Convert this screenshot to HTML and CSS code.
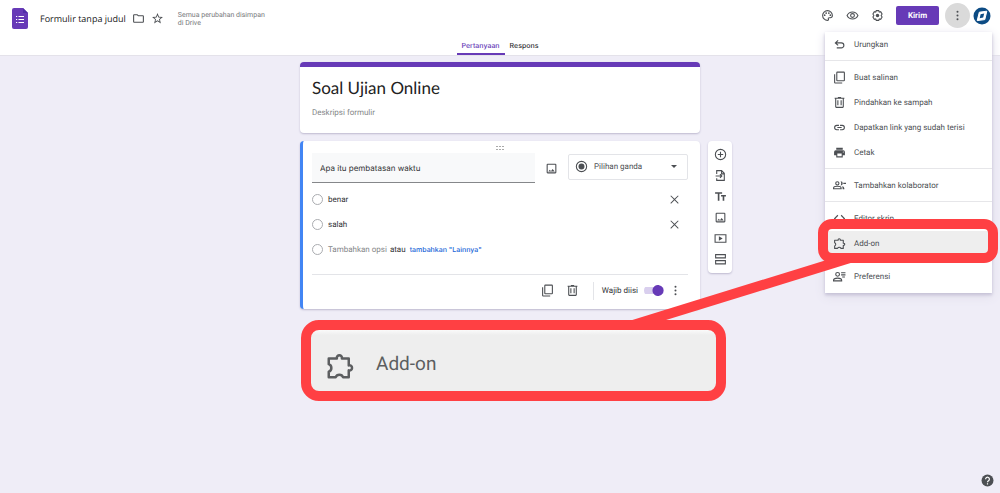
FILE: index.html
```html
<!DOCTYPE html>
<html lang="id">
<head>
<meta charset="utf-8">
<title>Formulir tanpa judul</title>
<link rel="stylesheet" href="styles.css">
</head>
<body>
<svg class="sprite" aria-hidden="true">
  <symbol id="image" viewBox="0 0 24 24"><path d="M19 5v14H5V5h14m0-2H5a2 2 0 0 0-2 2v14a2 2 0 0 0 2 2h14a2 2 0 0 0 2-2V5a2 2 0 0 0-2-2zm-5 10l-3 4-2-2.500-3 3h12z"/></symbol>
  <symbol id="copy" viewBox="0 0 24 24"><path d="M4 6H2v15a2 2 0 0 0 2 2h13v-2H4zM20 1H8a2 2 0 0 0-2 2v14a2 2 0 0 0 2 2h12a2 2 0 0 0 2-2V3a2 2 0 0 0-2-2zm0 16H8V3h12z"/></symbol>
  <symbol id="trash" viewBox="0 0 24 24"><path d="M15 3V2H9v1H3v2h1v15a2 2 0 0 0 2 2h12a2 2 0 0 0 2-2V5h1V3zm3 17H6V5h12zM8 8h2v9H8zm6 0h2v9h-2z"/></symbol>
  <symbol id="close" viewBox="0 0 24 24"><path d="M21 4.400L19.600 3 12 10.600 4.400 3 3 4.400 10.600 12 3 19.600 4.400 21 12 13.400 19.600 21 21 19.600 13.400 12z"/></symbol>
  <symbol id="more" viewBox="0 0 24 24"><circle cx="12" cy="4" r="2.200"/><circle cx="12" cy="12" r="2.200"/><circle cx="12" cy="20" r="2.200"/></symbol>
  <symbol id="puzzle" viewBox="0 0 24 24"><path d="M3 6h6.500c-.6-3.500 4.600-3.500 4 0H19v5.500c3.500-.6 3.500 4.600 0 4V21h-4.500a3.200 3.200 0 0 0-6 0H3v-4.500a3.200 3.200 0 0 0 0-6z" fill="none" stroke="currentColor" stroke-width="2" stroke-linejoin="round"/></symbol>
</svg>

<header class="header">
  <div class="topbar">
    <svg class="logo" viewBox="0 0 16 21"><path d="M2 0h9l5 5v14a2 2 0 0 1-2 2H2a2 2 0 0 1-2-2V2a2 2 0 0 1 2-2z" fill="#673ab7"/><path d="M11 0l5 5h-5z" fill="#512da8"/><path d="M6.500 8.500H12M6.500 11.500H12M6.500 14.500H12M4 8.500h1.200M4 11.500h1.200M4 14.500h1.200" stroke="#fff" stroke-width="1.200"/></svg>
    <h1 class="doc-title">Formulir tanpa judul</h1>
    <button class="icon-button" aria-label="Pindahkan"><svg class="icon" viewBox="0 0 24 24"><path d="M20 6h-8l-2-2H4a2 2 0 0 0-2 2v12a2 2 0 0 0 2 2h16a2 2 0 0 0 2-2V8a2 2 0 0 0-2-2zm0 12H4V6h5.200l2 2H20z"/></svg></button>
    <button class="icon-button star" aria-label="Bintangi"><svg class="icon" viewBox="0 0 24 24"><path d="M22 9.200l-7.200-.6L12 2 9.200 8.600 2 9.200l5.500 4.700L5.800 21l6.200-3.700L18.200 21l-1.600-7.100zM12 15.400l-3.800 2.300 1-4.300-3.300-2.900 4.400-.4L12 6.100l1.700 4 4.400.4-3.300 2.900 1 4.300z"/></svg></button>
    <p class="saved">Semua perubahan disimpan di Drive</p>
    <div class="actions">
      <button class="icon-button" aria-label="Tema"><svg class="icon" viewBox="0 0 24 24"><path d="M12 3a9 9 0 1 0 0 18c1.600 0 2.300-1.300 1.700-2.500-.7-1.400 0-2.500 1.600-2.500H17a4 4 0 0 0 4-4c0-5-4-9-9-9z" fill="none" stroke="currentColor" stroke-width="2"/><circle cx="6.800" cy="11.500" r="1.600"/><circle cx="9.500" cy="7.500" r="1.600"/><circle cx="14.500" cy="7.500" r="1.600"/><circle cx="17.300" cy="11.500" r="1.600"/></svg></button>
      <button class="icon-button" aria-label="Pratinjau"><svg class="icon" viewBox="0 0 24 24"><path d="M2 12c2-4.200 5.700-6.500 10-6.500S20 7.800 22 12c-2 4.200-5.700 6.500-10 6.500S4 16.200 2 12z" fill="none" stroke="currentColor" stroke-width="2"/><circle cx="12" cy="12" r="3.500" fill="none" stroke="currentColor" stroke-width="2"/></svg></button>
      <button class="icon-button" aria-label="Setelan"><svg class="icon" viewBox="0 0 24 24"><path d="M9.500 3h5l.7 2.700 2.600-.8 2.700 4.300-1.800 2.800 1.800 2.800-2.700 4.300-2.600-.8-.7 2.700h-5l-.7-2.700-2.600.8-2.700-4.300L5.300 12 3.500 9.200l2.700-4.300 2.600.8z" fill="none" stroke="currentColor" stroke-width="2" stroke-linejoin="round"/><circle cx="12" cy="12" r="3.200"/></svg></button>
      <button class="send">Kirim</button>
      <button class="icon-button more-button" aria-label="Lainnya"><svg class="icon small"><use href="#more"/></svg></button>
      <button class="icon-button" aria-label="Akun"><svg class="avatar" viewBox="0 0 18 18"><circle cx="9" cy="9" r="8.500" fill="#0c4b84"/><path d="M6.300 5.200l7.500-1-2 8.400-7.600 1z" fill="#fff" stroke="#fff" stroke-linejoin="round"/><path d="M7.600 7.200l3.600-.6-1 4-3.500.6z" fill="#0c4b84"/></svg></button>
    </div>
  </div>
  <nav class="tabs">
    <a class="tab active" href="#form">Pertanyaan</a>
    <a class="tab" href="#respons">Respons</a>
  </nav>
</header>

<main class="main" id="form">
  <div class="form">
    <section class="card title-card">
      <h2 class="form-title">Soal Ujian Online</h2>
      <p class="description">Deskripsi formulir</p>
    </section>

    <section class="card question">
      <svg class="drag" viewBox="0 0 8 5"><path d="M0 .5h2M3 .5h2M6 .5h2M0 3.500h2M3 3.500h2M6 3.500h2" stroke="#aaa"/></svg>
      <div class="question-row">
        <input class="question-input" type="text" value="Apa itu pembatasan waktu" aria-label="Pertanyaan">
        <button class="icon-button" aria-label="Tambahkan gambar"><svg class="icon"><use href="#image"/></svg></button>
        <label class="type-box">
          <svg class="icon" viewBox="0 0 24 24"><circle cx="12" cy="12" r="9.500" fill="none" stroke="currentColor" stroke-width="2"/><circle cx="12" cy="12" r="5.500"/></svg>
          <select class="type-select" aria-label="Jenis pertanyaan"><option>Pilihan ganda</option></select>
          <svg class="caret" viewBox="0 0 6 3"><path d="M0 0h6L3 3z"/></svg>
        </label>
      </div>
      <div class="option">
        <input class="radio" type="radio" id="opt1" disabled><label for="opt1">benar</label>
        <button class="icon-button remove" aria-label="Hapus benar"><svg class="icon small"><use href="#close"/></svg></button>
      </div>
      <div class="option">
        <input class="radio" type="radio" id="opt2" disabled><label for="opt2">salah</label>
        <button class="icon-button remove" aria-label="Hapus salah"><svg class="icon small"><use href="#close"/></svg></button>
      </div>
      <div class="option">
        <input class="radio" type="radio" id="opt3" disabled><label class="muted" for="opt3">Tambahkan opsi</label>
        <span class="or">atau</span>
        <button class="other">tambahkan "Lainnya"</button>
      </div>
      <footer class="card-footer">
        <button class="icon-button" aria-label="Duplikat"><svg class="icon"><use href="#copy"/></svg></button>
        <button class="icon-button" aria-label="Hapus"><svg class="icon"><use href="#trash"/></svg></button>
        <label class="required">Wajib diisi <input class="switch" type="checkbox" checked></label>
        <button class="icon-button" aria-label="Opsi lainnya"><svg class="icon small"><use href="#more"/></svg></button>
      </footer>
    </section>
  </div>

  <aside class="tools">
    <button class="icon-button" aria-label="Tambahkan pertanyaan"><svg class="icon" viewBox="0 0 24 24"><path d="M12 7v10M7 12h10" stroke="currentColor" stroke-width="2"/><circle cx="12" cy="12" r="9.500" fill="none" stroke="currentColor" stroke-width="2"/></svg></button>
    <button class="icon-button" aria-label="Impor pertanyaan"><svg class="icon" viewBox="0 0 24 24"><path d="M5 9V3h9l5 5v13H5v-4M14 3v6h5M3 13h11M11 9.500l3.500 3.500-3.500 3.500" fill="none" stroke="currentColor" stroke-width="2"/></svg></button>
    <button class="icon-button" aria-label="Tambahkan judul"><svg class="icon" viewBox="0 0 24 24"><path d="M2 4v3h5v13h3V7h5V4zM22 9h-9v3h3v8h3v-8h3z"/></svg></button>
    <button class="icon-button" aria-label="Tambahkan gambar"><svg class="icon"><use href="#image"/></svg></button>
    <button class="icon-button" aria-label="Tambahkan video"><svg class="icon" viewBox="0 0 24 24"><path d="M2 5h20v14H2z" fill="none" stroke="currentColor" stroke-width="2"/><path d="M9 8v8l7-4z"/></svg></button>
    <button class="icon-button" aria-label="Tambahkan bagian"><svg class="icon" viewBox="0 0 24 24"><path d="M3 3h18v6H3zM3 14h18v6H3z" fill="none" stroke="currentColor" stroke-width="2"/></svg></button>
  </aside>
</main>

<div class="menu">
  <button class="menu-item"><svg class="icon small" viewBox="0 0 24 24"><path d="M9 3L3 8.500 9 14M3 8.500h13a5 5 0 0 1 0 11H6" fill="none" stroke="currentColor" stroke-width="2.500"/></svg>Urungkan</button>
  <hr class="separator">
  <button class="menu-item"><svg class="icon"><use href="#copy"/></svg>Buat salinan</button>
  <button class="menu-item"><svg class="icon"><use href="#trash"/></svg>Pindahkan ke sampah</button>
  <button class="menu-item"><svg class="icon" viewBox="0 0 24 24"><path d="M11 8H7a4 4 0 0 0 0 8h4M13 8h4a4 4 0 0 1 0 8h-4M8 12h8" fill="none" stroke="currentColor" stroke-width="2"/></svg>Dapatkan link yang sudah terisi</button>
  <button class="menu-item"><svg class="icon" viewBox="0 0 24 24"><path d="M19 8H5a3 3 0 0 0-3 3v6h4v4h12v-4h4v-6a3 3 0 0 0-3-3zm-3 11H8v-5h8zm3-7a1 1 0 1 1 0-2 1 1 0 0 1 0 2zM18 3H6v4h12z"/></svg>Cetak</button>
  <hr class="separator">
  <button class="menu-item"><svg class="icon" viewBox="0 0 24 24"><g fill="none" stroke="currentColor" stroke-width="2"><circle cx="8" cy="8" r="3"/><path d="M1 18v-1c0-2 4-3.500 7-3.500s7 1.500 7 3.500v1z"/></g><path d="M14 4a4 4 0 1 1 0 8c1.500-2 1.500-6 0-8zM17 13.500c3 .6 4 2 4 5.500h-3zM19 7h5v2h-5z"/></svg>Tambahkan kolaborator</button>
  <hr class="separator">
  <button class="menu-item"><svg class="icon" viewBox="0 0 24 24"><path d="M9 6l-6 6 6 6M15 6l6 6-6 6" fill="none" stroke="currentColor" stroke-width="2"/></svg>Editor skrip</button>
  <button class="menu-item selected"><svg class="icon"><use href="#puzzle"/></svg>Add-on</button>
  <hr class="separator">
  <button class="menu-item"><svg class="icon" viewBox="0 0 24 24"><path d="M1 20v-1c0-2.500 4-4 7.500-4s7.500 1.500 7.500 4v1zM15 5h8M15 9h8M17 13h5" fill="none" stroke="currentColor" stroke-width="2"/><circle cx="8.500" cy="8" r="3.500" fill="none" stroke="currentColor" stroke-width="2"/></svg>Preferensi</button>
</div>

<svg class="pointer" viewBox="0 0 1000 493" aria-hidden="true"><path d="M633 325L850 258" stroke="#ff4043" stroke-width="10"/></svg>
<div class="ring"></div>
<div class="callout"><svg class="callout-icon"><use href="#puzzle"/></svg><span>Add-on</span></div>

<button class="icon-button help" aria-label="Bantuan"><svg class="icon" viewBox="0 0 24 24"><circle cx="12" cy="12" r="11"/><path d="M8.500 9.500a3.500 3.500 0 1 1 5.500 2.800c-1.200.9-2 1.400-2 2.700M12 17v2.500" fill="none" stroke="#fff" stroke-width="2.200"/></svg></button>
</body>
</html>
```
FILE: styles.css
```css
* { box-sizing: border-box; }

body {
  margin: 0;
  min-height: 100vh;
  position: relative;
  overflow: hidden;
  background: #efedf7;
  color: #303134;
  font: 8px/12px Roboto, sans-serif;
  font-size: 8px;
  text-rendering: geometricPrecision;
}

h1, h2, p { margin: 0; font-weight: 400; }
button, input, select { font: inherit; color: inherit; text-rendering: inherit; }
button { padding: 0; border: 0; background: none; }
.sprite { position: absolute; width: 0; height: 0; }
.icon { width: 13px; height: 13px; flex: none; display: block; fill: currentColor; }
.icon.small { width: 11px; height: 11px; }
.icon-button { display: grid; place-items: center; color: #4c4f53; flex: none; }

.header { background: #fff; border-bottom: 1px solid #e4e2ea; }
.topbar { display: flex; align-items: center; height: 37px; padding: 0 9px 0 12px; }
.logo { width: 16px; height: 21px; }
.doc-title { font: 9px/14px "Open Sans", sans-serif; color: #222; margin: 0 6px 0 12px; }
.star { margin-left: 6px; }
.saved { width: 90px; margin-left: 14px; font-size: 7px; line-height: 8px; color: #77797c; }
.actions { display: flex; align-items: center; gap: 12px; margin-left: auto; height: 31px; align-self: flex-start; }
.send { width: 43px; height: 19px; background: #673ab7; color: #fff; border-radius: 2px; font-weight: 700; }
.more-button { width: 25px; height: 25px; border-radius: 50%; background: #dadada; margin: 0 -9px 0 -6px; }
.avatar { width: 18px; height: 18px; }
.tabs { display: flex; justify-content: center; }
.tab {
  height: 18px;
  padding: 3px 5px 0;
  border-bottom: 2px solid transparent;
  color: #303134;
  font: 500 7px/12px Inter, sans-serif;
  text-decoration: none;
}
.tab.active { color: #673ab7; border-color: #673ab7; }

.main { display: grid; grid-template-columns: 1fr 400px 1fr; column-gap: 8px; padding-top: 6px; }
.form { grid-column: 2; display: grid; gap: 8px; }
.card { background: #fff; border-radius: 4px; box-shadow: 0 1px 2px #bdb9cf; }
.title-card { border-top: 5px solid #673ab7; padding: 10px 12px 14px; }
.form-title { font: 17px/22px Lato, sans-serif; color: #222; }
.description { margin-top: 8px; color: #85878a; }

.question { border-left: 3px solid #4285f4; padding: 5px 12px 5px 9px; }
.drag { display: block; width: 8px; height: 5px; margin: 0 auto 2px; }
.question-row { display: flex; align-items: center; gap: 10px; margin-bottom: 4px; }
.question-input {
  flex: 1;
  min-width: 0;
  height: 30px;
  padding: 0 8px;
  background: #f8f9fa;
  border: 0;
  border-bottom: 1px solid #85878a;
  font: 8px/12px Inter, sans-serif;
}
.type-box {
  display: flex;
  align-items: center;
  width: 120px;
  height: 26px;
  margin-bottom: 3px;
  padding: 0 10px 0 6px;
  border: 1px solid #e3e4e8;
  border-radius: 2px;
  color: #4c4f53;
}
.type-select { flex: 1; min-width: 0; appearance: none; border: 0; background: none; padding: 0 6px; }
.caret { width: 6px; height: 3px; fill: currentColor; }

.option { display: flex; align-items: center; height: 25px; }
.radio { appearance: none; width: 11px; height: 11px; margin: 0 5px 0 0; border: 1px solid #aaacb0; border-radius: 50%; }
.remove { margin: 0 8px 0 auto; }
.muted { color: #85878a; }
.or { margin: 0 4px 0 3px; }
.other { color: #1a66d8; font: 500 7px/12px Inter, sans-serif; }
.card-footer {
  display: flex;
  align-items: center;
  justify-content: flex-end;
  gap: 12px;
  height: 30px;
  margin-top: 12px;
  border-top: 1px solid #e3e4e8;
  padding: 2px 7px 0 0;
}
.required { display: flex; align-items: center; gap: 6px; padding-left: 8px; margin: 0 -6px 0 2px; height: 18px; border-left: 1px solid #e3e4e8; }
.switch {
  appearance: none;
  width: 20px;
  height: 11px;
  margin: 0;
  border-radius: 6px;
  background: radial-gradient(circle at 14px 50%, #673ab7 5px, transparent 6px) no-repeat, linear-gradient(#d9cfee, #d9cfee) 0 50% / 100% 7px no-repeat;
}

.tools {
  justify-self: start;
  align-self: start;
  display: grid;
  justify-content: center;
  gap: 8px;
  width: 24px;
  margin-top: 79px;
  padding: 7px 0;
  background: #fff;
  border-radius: 4px;
  box-shadow: 0 1px 2px #bdb9cf;
}

.menu {
  position: absolute;
  top: 32px;
  right: 8px;
  width: 167px;
  padding-bottom: 4px;
  background: #fff;
  box-shadow: 0 2px 3px #c5c1d6, 0 3px 10px #dedbe9;
}
.menu-item { display: flex; align-items: center; width: 100%; height: 25px; padding-left: 8px; text-align: left; color: #4c4f53; gap: 8px; }
.menu-item .small { margin: 0 1px; }
.selected { background: #eee; }
.separator { height: 1px; margin: 3px 0 4px; border: 0; background: #e6e6e9; }

.pointer { position: absolute; inset: 0; width: 100%; pointer-events: none; }
.ring {
  position: absolute;
  top: 219px;
  right: 2px;
  width: 180px;
  height: 44px;
  border: 10px solid #ff4043;
  border-radius: 14px;
}
.callout {
  position: absolute;
  top: 320px;
  left: 301px;
  width: 425px;
  height: 81px;
  display: flex;
  align-items: center;
  gap: 21px;
  padding: 10px 0 0 14px;
  border: 10px solid #ff4043;
  border-radius: 18px;
  background: linear-gradient(#fafafa, #eee 5px);
  color: #5c5e60;
  font-size: 19px;
  line-height: 24px;
}
.callout span { margin-top: -4px; }
.callout-icon { width: 30px; height: 30px; }
.help { position: absolute; right: 6px; bottom: 6px; }
```
